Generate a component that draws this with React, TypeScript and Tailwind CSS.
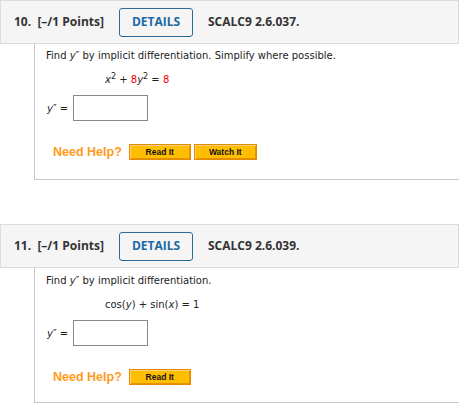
import React from "react";

const verdana = { fontFamily: "Verdana, 'DejaVu Sans', sans-serif" };

interface HeaderProps {
  num: string;
  code: string;
}

const QuestionHeader = ({ num, code }: HeaderProps) => (
  <div className="flex items-center h-[44px] border border-[#dcdcdc] bg-[#f5f5f5] pl-[13px] font-['Open_Sans',sans-serif] text-[12px] font-bold text-[#333]">
    <span className="w-[105px] whitespace-pre">{num}  [–/1 Points]</span>
    <span className="flex items-center justify-center w-[74px] h-[29px] border border-[#2a6a9b] rounded-[3px] text-[#1b6aa5]">
      DETAILS
    </span>
    <span className="ml-[15px]">{code}</span>
  </div>
);

const HelpButton = ({ label, width }: { label: string; width: string }) => (
  <span
    className={`flex items-center justify-center ${width} h-[16px] border border-[#e38a00] bg-[#ffbf00] shadow-[inset_1px_1px_0_#ffd27a,inset_-1px_-1px_0_#e79200] font-['Liberation_Sans',Arial,sans-serif] text-[8.5px] font-bold text-[#111]`}
  >
    {label}
  </span>
);

const HelpRow = ({ watch }: { watch?: boolean }) => (
  <div className="flex items-center gap-[7px] pl-[18px]">
    <span className="font-['Liberation_Sans',Arial,sans-serif] text-[12.5px] font-bold text-[#ff9a1a]">
      Need Help?
    </span>
    <div className="flex gap-[3px]">
      <HelpButton label="Read It" width="w-[62px]" />
      {watch && <HelpButton label="Watch It" width="w-[63px]" />}
    </div>
  </div>
);

const AnswerRow = () => (
  <div className="flex items-center gap-[5px] pl-[12px]">
    <span className="text-[10px] text-[#222]" style={verdana}>
      <i>y</i>″ =
    </span>
    <span className="w-[75px] h-[26px] border border-[#888] bg-white" />
  </div>
);

export default function App() {
  return (
    <div className="w-[459px] h-[406px] bg-white" style={verdana}>
      <QuestionHeader num="10." code="SCALC9 2.6.037." />
      <div className="ml-[34px] h-[136px] border-l border-b border-[#c8c8c8] pt-[5px]">
        <p className="pl-[11px] text-[10px] text-[#222] leading-[14px]">
          Find <i>y</i>″ by implicit differentiation. Simplify where possible.
        </p>
        <p className="pl-[70px] mt-[10px] text-[10px] text-[#222] leading-[14px]">
          <i>x</i>
          <sup className="text-[8px]">2</sup> + <span className="text-[#e00]">8</span>
          <i>y</i>
          <sup className="text-[8px]">2</sup> = <span className="text-[#e00]">8</span>
        </p>
        <div className="mt-[8px]">
          <AnswerRow />
        </div>
        <div className="mt-[22px]">
          <HelpRow watch />
        </div>
      </div>

      <div className="mt-[44px]">
        <QuestionHeader num="11." code="SCALC9 2.6.039." />
      </div>
      <div className="ml-[34px] h-[135px] border-l border-b border-[#c8c8c8] pt-[6px]">
        <p className="pl-[11px] text-[10px] text-[#222] leading-[14px]">
          Find <i>y</i>″ by implicit differentiation.
        </p>
        <p className="pl-[70px] mt-[10px] text-[10px] text-[#222] leading-[14px]">
          cos(<i>y</i>) + sin(<i>x</i>) = 1
        </p>
        <div className="mt-[8px]">
          <AnswerRow />
        </div>
        <div className="mt-[22px]">
          <HelpRow />
        </div>
      </div>
    </div>
  );
}
